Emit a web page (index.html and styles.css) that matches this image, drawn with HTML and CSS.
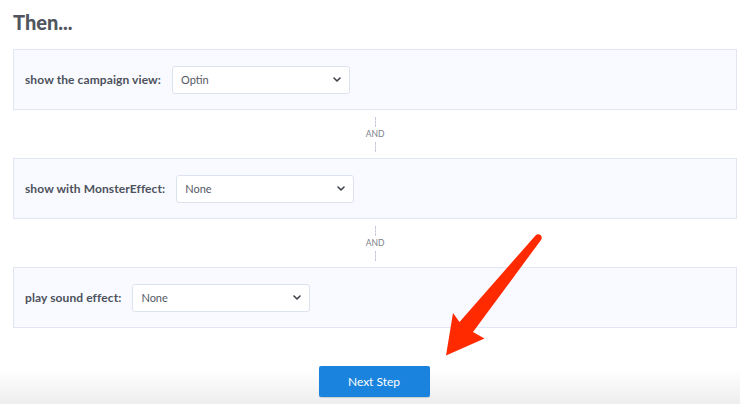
FILE: index.html
```html
<!DOCTYPE html>
<html>
<head>
<meta charset="utf-8">
<link rel="stylesheet" href="styles.css">
</head>
<body>
<div class="page">
  <h1 class="title">Then...</h1>
  <div class="panel">
    <span class="label">show the campaign view:</span>
    <div class="select"><span>Optin</span><svg class="chev" viewBox="0 0 8 5" width="8" height="5"><path d="M1 1 L4 4 L7 1" fill="none" stroke="#3e434c" stroke-width="1.6" stroke-linecap="round" stroke-linejoin="round"/></svg></div>
  </div>
  <div class="connector"><span class="dash"></span><span class="and">AND</span><span class="dash"></span></div>
  <div class="panel">
    <span class="label">show with MonsterEffect:</span>
    <div class="select"><span>None</span><svg class="chev" viewBox="0 0 8 5" width="8" height="5"><path d="M1 1 L4 4 L7 1" fill="none" stroke="#3e434c" stroke-width="1.6" stroke-linecap="round" stroke-linejoin="round"/></svg></div>
  </div>
  <div class="connector"><span class="dash"></span><span class="and">AND</span><span class="dash"></span></div>
  <div class="panel">
    <span class="label">play sound effect:</span>
    <div class="select"><span>None</span><svg class="chev" viewBox="0 0 8 5" width="8" height="5"><path d="M1 1 L4 4 L7 1" fill="none" stroke="#3e434c" stroke-width="1.6" stroke-linecap="round" stroke-linejoin="round"/></svg></div>
  </div>
  <div class="actions">
    <button class="btn">Next Step</button>
  </div>
</div>
<svg class="arrow" width="740" height="404" viewBox="0 0 740 404">
  <path d="M535.5 235.5 Q538 233 541 235.5 Q542.5 238 541 240 L473 332 L484.5 338.5 L446 355.5 L453 313 L459.5 322 Z" fill="#ff2a00"/>
</svg>
</body>
</html>
```

FILE: styles.css
```css
html, body {
  margin: 0;
  padding: 0;
  height: 404px;
  overflow: hidden;
}
body {
  background: linear-gradient(to bottom, #ffffff 0, #ffffff 370px, #eeeeee 404px);
  font-family: Lato, "Open Sans", sans-serif;
  position: relative;
}
.page {
  padding: 0 3px 0 13px;
}
.title {
  margin: 0;
  padding-top: 10px;
  height: 49px;
  box-sizing: border-box;
  font-size: 20px;
  line-height: 24px;
  font-weight: 900;
  color: #50555e;
}
.panel {
  display: flex;
  align-items: center;
  gap: 11px;
  height: 61px;
  box-sizing: border-box;
  padding: 0 11px;
  background: #f9faff;
  border: 1px solid #e2e6f3;
}
.label {
  font-size: 12px;
  font-weight: 700;
  color: #4c515b;
  letter-spacing: 0.1px;
}
.select {
  width: 178px;
  height: 28px;
  box-sizing: border-box;
  background: #ffffff;
  border: 1px solid #dde2ef;
  border-radius: 3px;
  display: flex;
  align-items: center;
  justify-content: space-between;
  padding: 0 8px 0 8px;
  font-size: 11px;
  color: #555a63;
}
.chev {
  display: block;
}
.connector {
  height: 48px;
  display: flex;
  flex-direction: column;
  align-items: center;
  justify-content: center;
  gap: 3px;
}
.dash {
  width: 0;
  height: 10px;
  border-left: 1px dashed #c6cadb;
}
.and {
  font-size: 8.5px;
  line-height: 9px;
  color: #7a7f88;
}
.actions {
  display: flex;
  justify-content: center;
  padding-top: 38px;
  padding-right: 2px;
}
.btn {
  width: 111px;
  height: 31px;
  border: none;
  border-radius: 2px;
  background: #1a83dd;
  color: #ffffff;
  font-family: Lato, "Open Sans", sans-serif;
  font-size: 12px;
  font-weight: 400;
  box-shadow: 0 1px 1px rgba(0,0,0,0.15);
}
.arrow {
  position: absolute;
  left: 0;
  top: 0;
  pointer-events: none;
}
```
